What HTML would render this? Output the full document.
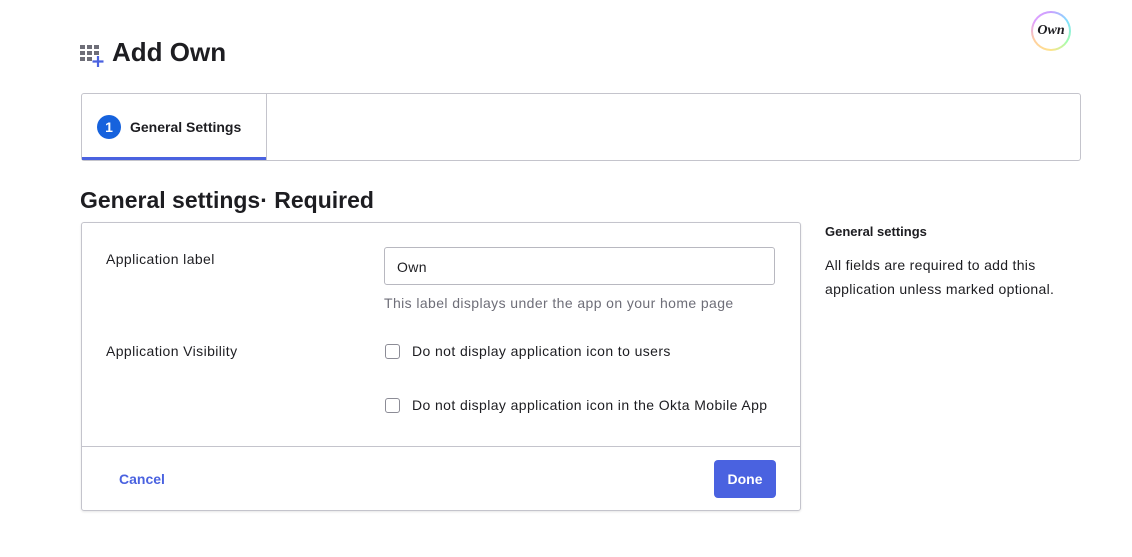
<!DOCTYPE html>
<html><head><style>
*{box-sizing:border-box;margin:0;padding:0}
body{width:1132px;height:557px;background:#fff;font-family:"Liberation Sans",sans-serif;color:#1d1d21;position:relative;overflow:hidden}
.abs{position:absolute}
.lbl{font-size:14px;letter-spacing:.4px;color:#1d1d21}
.cb{position:absolute;width:15px;height:15px;border:1px solid #8c8c96;border-radius:3px;background:#fff}
</style></head><body>
<div class="abs" style="left:1031px;top:11px;width:40px;height:40px;border-radius:50%;background:conic-gradient(#c9a0ff,#80e0ff,#a0ffb0,#ffe38a,#ffd0a0,#e0a0ff,#c9a0ff);"></div>
<div class="abs" style="left:1033px;top:13px;width:36px;height:36px;border-radius:50%;background:#fff;text-align:center;line-height:36px;font-style:italic;font-weight:bold;font-size:14px;font-family:'Liberation Serif',serif">Own</div>

<svg class="abs" style="left:80px;top:43px" width="26" height="24" viewBox="0 0 26 24">
<g fill="#6e6e78"><rect x="0" y="2" width="5" height="4"/><rect x="7" y="2" width="5" height="4"/><rect x="14" y="2" width="5" height="4"/><rect x="0" y="8" width="5" height="4"/><rect x="7" y="8" width="5" height="4"/><rect x="14" y="8" width="5" height="4"/><rect x="0" y="14" width="5" height="4"/><rect x="7" y="14" width="5" height="4"/></g>
<path d="M18 13v11M12.5 18.5h11" stroke="#4a62e0" stroke-width="2.2"/></svg>
<div class="abs" style="left:112px;top:37px;font-size:26px;font-weight:bold">Add Own</div>

<div class="abs" style="left:81px;top:93px;width:1000px;height:68px;border:1px solid #c4c4cc;border-radius:3px"></div>
<div class="abs" style="left:266px;top:94px;width:1px;height:66px;background:#c4c4cc"></div>
<div class="abs" style="left:82px;top:157px;width:184px;height:3px;background:#4a62e0"></div>
<div class="abs" style="left:97px;top:115px;width:24px;height:24px;border-radius:50%;background:#1662dd;color:#fff;font-weight:bold;font-size:14px;text-align:center;line-height:24px">1</div>
<div class="abs" style="left:130px;top:119px;font-size:14px;font-weight:bold">General Settings</div>

<div class="abs" style="left:80px;top:187px;font-size:23px;font-weight:bold">General settings· Required</div>

<div class="abs" style="left:81px;top:222px;width:720px;height:289px;border:1px solid #c4c4cc;border-radius:3px;box-shadow:0 1px 2px rgba(0,0,0,.1)"></div>
<div class="abs" style="left:82px;top:446px;width:718px;height:1px;background:#c4c4cc"></div>
<div class="abs lbl" style="left:106px;top:251px">Application label</div>
<div class="abs" style="left:384px;top:247px;width:391px;height:38px;border:1px solid #b8b8c0;border-radius:3px;padding:0 12px;line-height:38px;font-size:14px;letter-spacing:.4px">Own</div>
<div class="abs" style="left:384px;top:295px;font-size:14px;letter-spacing:.4px;color:#6e6e78">This label displays under the app on your home page</div>
<div class="abs lbl" style="left:106px;top:343px">Application Visibility</div>
<div class="cb" style="left:385px;top:344px"></div>
<div class="abs lbl" style="left:412px;top:343px">Do not display application icon to users</div>
<div class="cb" style="left:385px;top:398px"></div>
<div class="abs lbl" style="left:412px;top:397px">Do not display application icon in the Okta Mobile App</div>
<div class="abs" style="left:119px;top:471px;font-size:14px;font-weight:bold;color:#4a62e0">Cancel</div>
<div class="abs" style="left:714px;top:460px;width:62px;height:38px;background:#4a62e0;border-radius:4px;color:#fff;font-weight:bold;font-size:14px;text-align:center;line-height:38px">Done</div>

<div class="abs" style="left:825px;top:224px;font-size:13px;font-weight:bold">General settings</div>
<div class="abs" style="left:825px;top:253px;font-size:14px;letter-spacing:.3px;line-height:24px">All fields are required to add this<br>application unless marked optional.</div>
</body></html>
